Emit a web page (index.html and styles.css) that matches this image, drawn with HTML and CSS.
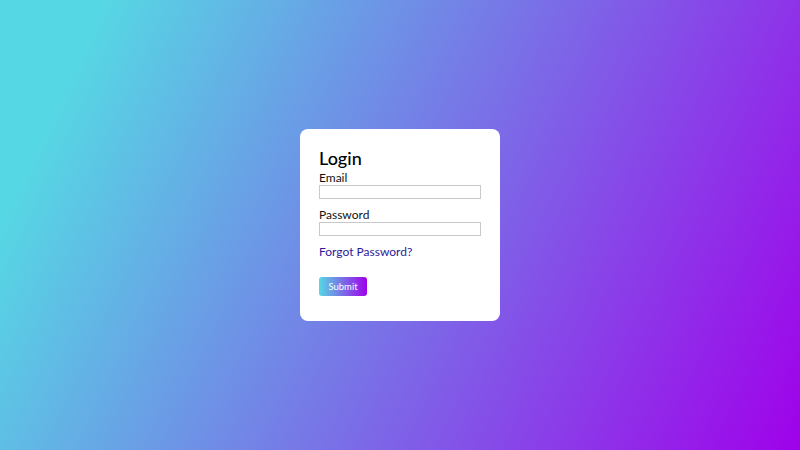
FILE: index.html
```html
<!DOCTYPE html>
<html>
<head>
<meta charset="utf-8">
<link rel="stylesheet" href="styles.css">
</head>
<body>
<div class="page">
  <form class="card">
    <h1 class="title">Login</h1>
    <label class="label">Email</label>
    <input class="field" type="text">
    <label class="label label-gap">Password</label>
    <input class="field" type="password">
    <a class="forgot" href="#">Forgot Password?</a>
    <button class="submit" type="button">Submit</button>
  </form>
</div>
</body>
</html>
```
FILE: styles.css
```css
html, body {
  margin: 0;
  padding: 0;
}
body {
  font-family: "Lato", "Noto Sans", sans-serif;
}
.page {
  width: 100vw;
  height: 100vh;
  display: flex;
  align-items: center;
  justify-content: center;
  background: linear-gradient(115deg, #56d8e4 10%, #9f01ea 100%);
}
.card {
  width: 200px;
  box-sizing: border-box;
  background: #fff;
  border-radius: 8px;
  padding: 18px 19px 25px;
  display: flex;
  flex-direction: column;
  align-items: flex-start;
}
.title {
  margin: 0;
  font-size: 18px;
  line-height: 23px;
  font-weight: 500;
  color: #000;
}
.label {
  font-size: 12px;
  line-height: 15px;
  color: #111;
}
.label-gap {
  margin-top: 8px;
}
.field {
  width: 162px;
  height: 14px;
  box-sizing: border-box;
  margin: 0;
  padding: 0 3px;
  border: 1px solid #c9c9c9;
  outline: none;
  background: #fff;
}
.forgot {
  margin-top: 8px;
  font-size: 12px;
  line-height: 15px;
  color: #2b1b9c;
  text-decoration: none;
}
.submit {
  margin-top: 18px;
  width: 48px;
  height: 19px;
  border: none;
  border-radius: 3px;
  padding: 0;
  font-family: "Lato", "Noto Sans", sans-serif;
  font-size: 9.5px;
  color: #fff;
  background: linear-gradient(to right, #56d8e4, #9f01ea);
}
```
